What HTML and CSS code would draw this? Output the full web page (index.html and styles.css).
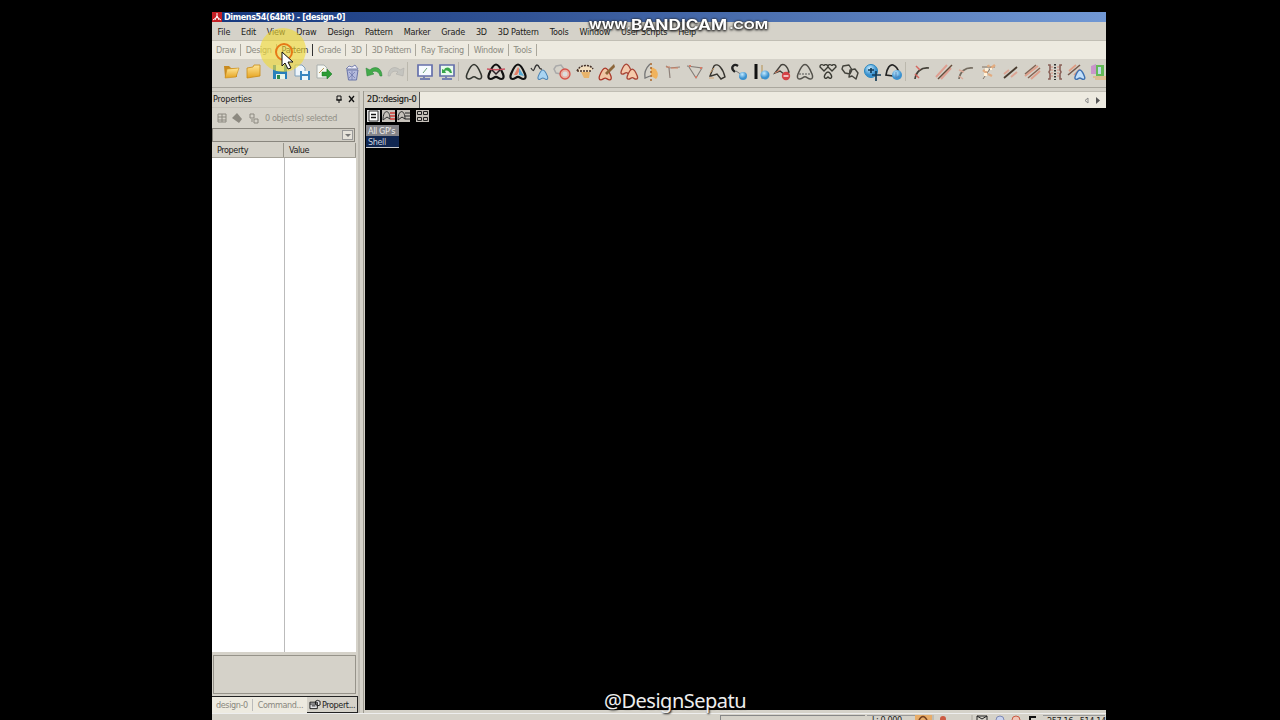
FILE: index.html
```html
<!DOCTYPE html>
<html lang="en"><head><meta charset="utf-8"><title>Dimens54</title><link rel="stylesheet" href="styles.css"></head>
<body>
<svg width="0" height="0" class="defs"><defs>
<path id="piece" d="M9 1.500C6 1.500 4 6 2 11C.8 14 1.500 16 3.500 16C6 16 7 13.800 9 13.800S12 16 14.500 16C16.500 16 17.200 14 16 11C14 6 12 1.500 9 1.500Z"/>
<radialGradient id="ball" cx=".4" cy=".3"><stop offset="0" stop-color="#c3eaff"/><stop offset="1" stop-color="#3a91cf"/></radialGradient>
<linearGradient id="gold" x2="0" y2="1"><stop stop-color="#ffe695"/><stop offset="1" stop-color="#e5a321"/></linearGradient>
</defs></svg>
<div class="window">
<div class="title"><svg class="logo" viewBox="0 0 10 10"><rect width="10" height="10" fill="#c41f24"/><path d="M5 1v4L1 8M5 5l4 3M3 8l2-4 2 4" stroke="#fff" fill="none"/></svg><span>Dimens54(64bit) - [design-0]</span></div>
<div class="menu"><span>File</span><span>Edit</span><span>View</span><span>Draw</span><span>Design</span><span>Pattern</span><span>Marker</span><span>Grade</span><span>3D</span><span>3D Pattern</span><span>Tools</span><span>Window</span><span>User Scripts</span><span>Help</span></div>
<div class="tabs"><span>Draw</span><span>Design</span><span class="on">Pattern</span><span>Grade</span><span>3D</span><span>3D Pattern</span><span>Ray Tracing</span><span>Window</span><span>Tools</span></div>
<div class="toolbar">
<svg viewBox="0 0 18 18"><path d="M2 3h5l2 2h6v9H3z" fill="#c98b20"/><path d="M5 6l12-1-3 9-11 1z" fill="url(#gold)" stroke="#c88a18" stroke-width=".6"/></svg>
<svg viewBox="0 0 18 18"><path d="M3 5l6-1 1-2 6 0v11L3 15z" fill="url(#gold)" stroke="#c88a18" stroke-width=".8"/></svg>
<i></i>
<svg viewBox="0 0 18 18"><path d="M2 2h13l1 1v13H2z" fill="#287fbb"/><path d="M5 2h8v6H5z" fill="#d6eee0"/><path d="M5 11h9v5H5z" fill="#e9f4e9"/><path d="M6 12h3v4H6z" fill="#2f8b4a"/></svg>
<svg viewBox="0 0 18 18"><path d="M2 2h7l3 3v8H2z" fill="#eef5fb" stroke="#7ea0bb"/><path d="M7 8h10v9H7z" fill="#3b87bf"/><path d="M9 8h6v3H9zM9 13h6v4H9z" fill="#eff8fb"/></svg>
<svg viewBox="0 0 18 18"><path d="M2 2h7l3 3v10H2z" fill="#f5f7f2" stroke="#a9afad"/><path d="M4 10l5-5" stroke="#ba9958"/><path d="M7 9h5V6l5 5-5 5v-3H7z" fill="#2b9c35" stroke="#157820" stroke-width=".5"/></svg>
<i class="wide"></i>
<svg viewBox="0 0 18 18"><path d="M4 7h11l-1.500 10h-8z" fill="#b5bbdd" stroke="#6b76a9"/><path d="M3 6l3-3 3 1 3-2 3 4z" fill="#f0f0fa" stroke="#7881ae"/><path d="M6 9l6 6M12 9l-6 6M9 8v9" stroke="#6b76a9" stroke-width=".7"/></svg>
<svg viewBox="0 0 18 18"><path d="M1 5l1 8 7-2-2-2c4-2 7 0 8 4h2C17 5 10 2 5 7z" fill="#43aa4a" stroke="#278338" stroke-width=".5"/></svg>
<svg viewBox="0 0 18 18"><path d="M17 5l-1 8-7-2 2-2c-4-2-7 0-8 4H1C1 5 8 2 13 7z" fill="#c4c4bf" stroke="#aaa9a4" stroke-width=".5"/></svg>
<i class="sep wider"></i>
<svg viewBox="0 0 18 18"><path d="M2 2h14v11H2z" fill="#f6faff" stroke="#6570ab" stroke-width="1.700"/><path d="M8 13v3M4 16h10" stroke="#7580b0" stroke-width="2"/><path d="M7 10l4-5" stroke="#6ca178"/></svg>
<svg viewBox="0 0 18 18"><path d="M2 2h14v11H2z" fill="#e9fbed" stroke="#6570ab" stroke-width="1.700"/><path d="M8 13v3M4 16h10" stroke="#7580b0" stroke-width="2"/><path d="M4 6v4h4L7 8c2-1 4 0 5 2h2C13 4 8 3 6 7z" fill="#38a64b"/></svg>
<i class="sep"></i>
<svg viewBox="0 0 18 18"><use href="#piece" fill="none" stroke="#333630" stroke-width="1.600"/></svg>
<svg viewBox="0 0 18 18"><use href="#piece" fill="none" stroke="#111" stroke-width="2.200"/><path d="M0 6c6 1 12 1 18 0" fill="none" stroke="#cc5260" stroke-width="1.400"/><path d="M5 7l4 4 4-4" fill="none" stroke="#2b2026" stroke-width="1.500"/></svg>
<svg viewBox="0 0 18 18"><use href="#piece" fill="none" stroke="#111" stroke-width="2.200"/><path d="M9 4l-4 8h3l3-5z" fill="#e68068"/><path d="M10 5l5 8-5-1z" fill="#54a9d4"/></svg>
<svg viewBox="0 0 18 18"><path d="M0 5c4 7 3-3 6-3s1 5 5 4" fill="none" stroke="#333" stroke-width="1.300"/><use href="#piece" transform="translate(6 6)scale(.65)" fill="#a9d4f2" stroke="#4b83b3" stroke-width="1.600"/></svg>
<svg viewBox="0 0 18 18"><path d="M3 3l5-1 3 4-3 5-5-1-2-4z" fill="none" stroke="#aaa" stroke-width="1.500"/><circle cx="12" cy="11" r="5" fill="#e8b2a5" stroke="#d5534a" stroke-width="1.300"/><circle cx="12" cy="11" r="2.500" fill="#ddd"/></svg>
<svg viewBox="0 0 18 18"><path d="M1 8c3-7 13-7 16-2l-4 3H1" fill="#f3dfbf"/><path d="M1 8c3-7 13-7 16-2M1 8h14" fill="none" stroke="#44312a" stroke-width="1.500" stroke-dasharray="2 1"/><path d="M5 9h9l-1 6H8z" fill="#e9b46b"/></svg>
<svg viewBox="0 0 18 18"><use href="#piece" transform="translate(0 4)scale(.8)" fill="#f0c6a4" stroke="#aa382a" stroke-width="1.600"/><path d="M7 10l9-9 1 3-8 8z" fill="#8c6539"/></svg>
<svg viewBox="0 0 18 18"><use href="#piece" transform="scale(.7)" fill="#f2c9ad" stroke="#a84435" stroke-width="1.900"/><use href="#piece" transform="translate(6 5)scale(.7)" fill="#f6caab" stroke="#a84435" stroke-width="1.900"/></svg>
<svg viewBox="0 0 18 18"><path d="M8 1C4 5 2 10 3 15l5-2" fill="none" stroke="#777" stroke-width="1.300"/><path d="M9 4c8 2 8 9 5 12l-5-3z" fill="#f0b25c"/><path d="M9 0v18" stroke="#a66022" stroke-width="1.400" stroke-dasharray="2 2"/></svg>
<svg viewBox="0 0 18 18"><path d="M2 3l3 2 11-1M5 5l1 10" fill="none" stroke="#8e817a" stroke-width="1.200"/><path d="M2 4h4M7 5h7" stroke="#d48263"/></svg>
<svg viewBox="0 0 18 18"><path d="M1 3l15 2-6 10L3 4" fill="none" stroke="#827d78" stroke-width="1.100"/><path d="M3 3h2M14 5h2M10 13v2" stroke="#d47b67" stroke-width="2"/></svg>
<svg viewBox="0 0 18 18"><path d="M2 13L6 3c4-4 9 3 11 11l-4 2-4-5-6 2z" fill="none" stroke="#373530" stroke-width="1.400"/><path d="M2 10l4-5M1 15h5" stroke="#cfa06e"/></svg>
<svg viewBox="0 0 18 18"><path d="M8 3C4 0 1 4 3 7l2 2" fill="none" stroke="#222" stroke-width="2.300"/><path d="M6 8l6 4" stroke="#777"/><circle cx="13" cy="13" r="4" fill="url(#ball)"/></svg>
<svg viewBox="0 0 18 18"><path d="M4 1v15" stroke="#111" stroke-width="3"/><path d="M10 2v14" stroke="#b59150"/><circle cx="13" cy="12" r="4.500" fill="url(#ball)"/></svg>
<svg viewBox="0 0 18 18"><path d="M1 10L7 2c4-2 7 3 8 7l-5 2-4-3z" fill="none" stroke="#43413b" stroke-width="1.400"/><path d="M1 10l5-3" stroke="#d88062"/><circle cx="12" cy="13" r="4.200" fill="#d44245"/><path d="M9.500 13h5" stroke="#fff" stroke-width="1.300"/></svg>
<svg viewBox="0 0 18 18"><use href="#piece" fill="none" stroke="#53514b" stroke-width="1.500"/><path d="M3 11h12" stroke="#555" stroke-width="1.200" stroke-dasharray="2 1"/></svg>
<svg viewBox="0 0 18 18"><path d="M5 8L1 4c0-4 4-2 4-1 0-2 4-2 4 1zM13 8L9 4c0-4 4-2 4-1 0-2 4-2 4 1zM9 9c-2 0-5 5-3 6 1 1 3-1 3-1s2 2 3 1c2-1-1-6-3-6z" fill="none" stroke="#3b3b34" stroke-width="1.400"/></svg>
<svg viewBox="0 0 18 18"><path d="M2 3l6-1 3 5-2 4-5-1-3-4zM9 7l5-1 3 4-2 6-4-3-3 1z" fill="none" stroke="#44433c" stroke-width="1.400" stroke-linejoin="round"/></svg>
<svg viewBox="0 0 18 18"><circle cx="8" cy="8" r="6.500" fill="url(#ball)" stroke="#2687c0"/><path d="M9 12h9M13 8v10M5 7h6M8 5v5" stroke="#153d59" stroke-width="1.700"/></svg>
<svg viewBox="0 0 18 18"><path d="M8 13L1 12C2 5 5 1 8 2s5 4 6 8" fill="none" stroke="#222" stroke-width="1.700"/><circle cx="12" cy="12" r="5" fill="url(#ball)"/><path d="M11 9v6l3-2" fill="none" stroke="#5383ba"/></svg>
<i class="sep wide"></i>
<svg viewBox="0 0 18 18"><path d="M2 16C3 9 8 4 16 5" fill="none" stroke="#444038" stroke-width="1.700"/><path d="M3 3l4 4M2 11l4 4" stroke="#d56860" stroke-width="1.500"/></svg>
<svg viewBox="0 0 18 18"><path d="M1 14L12 2M6 16L16 5" stroke="#dfa092" stroke-width="2"/><path d="M3 16L17 2" stroke="#644c3a" stroke-width="1.400"/></svg>
<svg viewBox="0 0 18 18"><path d="M2 16C3 9 8 4 16 5" fill="none" stroke="#746c60" stroke-width="1.700"/><path d="M2 7l5 2M2 13l4 3" stroke="#dbaa99" stroke-width="1.400"/></svg>
<svg viewBox="0 0 18 18"><path d="M4 16L13 3M3 4h13" stroke="#817365"/><path d="M9 2l1 2M4 7l4 3M9 11l4 2M12 5l4-3" stroke="#e2ac80" stroke-width="2.500"/><path d="M6 5h3v3H6zM5 10h3v3H5zM11 5h2v2h-2z" fill="#fff1d8"/></svg>
<svg viewBox="0 0 18 18"><path d="M2 11l5-4M9 14l6-5" stroke="#dda594" stroke-width="2"/><path d="M2 15L15 4" stroke="#493b2f" stroke-width="1.800"/></svg>
<svg viewBox="0 0 18 18"><path d="M1 13L14 3M7 16l9-8" stroke="#dfa08c" stroke-width="2"/><path d="M1 11L12 2M4 15L16 5" stroke="#846454" stroke-width="1.500"/></svg>
<svg viewBox="0 0 18 18"><path d="M2 2h2v5l-1 2 1 2v5H2M16 2h-2v5l1 2-1 2v5h2" fill="none" stroke="#896057" stroke-width="1.600"/><path d="M9 1v16" stroke="#333" stroke-width="2" stroke-dasharray="1.500 1.500"/><path d="M6 3v12M12 3v12" stroke="#d88d7c" stroke-dasharray="2 1"/></svg>
<svg viewBox="0 0 18 18"><path d="M1 8l7-6M6 12l6-6" stroke="#df9e86" stroke-width="1.700"/><path d="M0 12L12 2" stroke="#75584b" stroke-width="1.600"/><use href="#piece" transform="translate(6 6)scale(.65)" fill="#c4e0fa" stroke="#3f71b1" stroke-width="2.200"/></svg>
<svg viewBox="0 0 18 18"><path d="M1 3l5-2v10H1z" fill="#c996ca"/><path d="M6 2h8v11H6z" fill="#64b957"/><path d="M8 4h3v7H8z" fill="#c1d9e8"/><path d="M3 14h13M5 16h11" stroke="#e3a75e"/></svg>
</div>
<div class="workspace">
<div class="left">
<div class="phead"><span>Properties</span><svg viewBox="0 0 20 8"><path d="M2 1h4v4H2zM1 5h6M4 5v3" fill="none" stroke="#111"/><path d="M14 1l5 6M19 1l-5 6" stroke="#111" stroke-width="1.300"/></svg></div>
<div class="pbar"><svg viewBox="0 0 42 12"><g fill="none" stroke="#8c8980"><path d="M1 2h8v8H1zM1 5h8M1 8h8M5 2v8"/><path d="M33 2h4v4h-4zM37 7h4v4h-4zM35 7v3"/></g><path d="M15 6l5-5 5 6-3 4z" fill="#8c8980"/></svg><span>0 object(s) selected</span></div>
<div class="combo"><b></b></div>
<div class="cols"><span>Property</span><span>Value</span></div>
<div class="grid"><div></div></div>
<div class="desc"></div>
<div class="btabs"><span>design-0</span><span>Command...</span><div><svg viewBox="0 0 13 11"><path d="M1 3h8v7H1zM1 5h8M3 7h4M7 2l2-1 3 1v4l-3 1-2-2z" fill="#e8e8ec" stroke="#111"/></svg><span>Propert...</span></div></div>
</div>
<div class="right">
<div class="doctabs"><span>2D::design-0</span><svg viewBox="0 0 16 7"><path d="M4 1v5L1 3.500z" fill="none" stroke="#888"/><path d="M12 0v7l4-3.500z" fill="#555"/></svg></div>
<div class="canvas"><div class="modes">
<svg viewBox="0 0 13 12"><path d="M0 0h13v12H0z" fill="#ddd"/><path d="M2 1h9v10H2z" fill="#fff" stroke="#333"/><path d="M4 4.500h5M4 7.500h5" stroke="#111" stroke-width="1.500"/></svg>
<svg viewBox="0 0 13 12"><path d="M0 0h13v12H0z" fill="#c6c1ba"/><path d="M1 10c0-11 7-11 7-1l-3-2z" fill="none" stroke="#333"/><path d="M8 3h5M8 6h5M8 9h5" stroke="#cf3c36" stroke-width="1.500"/></svg>
<svg viewBox="0 0 13 12"><path d="M0 0h13v12H0z" fill="#c6c1ba"/><path d="M1 10c0-11 7-11 7-1l-3-2z" fill="none" stroke="#222"/><path d="M8 3h5M8 6h5M8 9h5" stroke="#222"/></svg>
<svg class="gap" viewBox="0 0 13 12"><path d="M0 0h13v12H0z" fill="#c6c1ba"/><path d="M1.500 1.500h4v3h-4zM7.500 1.500h4v3h-4zM1.500 7.500h4v3h-4zM7.500 7.500h4v3h-4z" fill="none" stroke="#222"/></svg></div>
<div class="layers"><span>All GP's</span><span>Shell</span></div></div>
</div></div>
<div class="status"><i class="c1"></i><span class="c2">L: 0.000</span><svg viewBox="0 0 128 5"><rect width="17" height="5" fill="#e8ad69"/><path d="M4 5q4-7 8 0" fill="none" stroke="#764321" stroke-width="1.500"/><path d="M18 0v5M57 0v5" stroke="#aaa79e"/><circle cx="28" cy="4" r="3" fill="#cc5b43"/><path d="M62 1h10v5M62 1l5 3 5-3M62 1v5" fill="none" stroke="#222"/><circle cx="85" cy="5" r="4" fill="#cad3ed" stroke="#7e89b4"/><circle cx="101" cy="5" r="4" fill="#f0c5b7" stroke="#c85b45"/><path d="M114 2h7M115 2v4" stroke="#111" stroke-width="2"/></svg><span class="c3">257.16, -514.141</span></div>
</div>
<div class="halo"></div>
<svg class="cursor" viewBox="0 0 14 20"><path d="M1 1v14l3-3 3 6 3-1-3-6h5z" fill="#fff" stroke="#111"/></svg>
<div class="brand"><svg viewBox="0 0 182 20"><g font-family="Inter, sans-serif" font-weight="700" fill="#fff"><text x="1" y="13" font-size="13" textLength="38" lengthAdjust="spacingAndGlyphs">www</text><text x="39" y="13" font-size="11">.</text><text x="43" y="13.500" font-size="14" textLength="96" lengthAdjust="spacingAndGlyphs">BANDICAM</text><text x="141" y="13" font-size="11" textLength="39" lengthAdjust="spacingAndGlyphs">.COM</text></g></svg></div>
<div class="handle">@DesignSepatu</div>
</body></html>
```
FILE: styles.css
```css
*{box-sizing:border-box}
body{margin:0;background:#000;width:1280px;height:720px;overflow:hidden;font:9px/12px "DejaVu Sans Condensed","DejaVu Sans",sans-serif;color:#1c1b19;padding:12px 0 0 212px;letter-spacing:-.4px;position:relative}
span{white-space:nowrap}
svg{display:block;overflow:visible}
.defs{position:absolute}
.window{width:894px;height:708px;display:flex;flex-direction:column;background:#d5d2c9;overflow:hidden}
.window>div{flex:none}
.title{height:10px;background:linear-gradient(90deg,#17397f,#315395 35%,#7198d4);display:flex;align-items:center;color:#fff;font-weight:700;gap:2px;letter-spacing:-.4px}
.title span{line-height:10px}
.logo{width:10px;height:10px}
.menu{height:19px;border-bottom:1px solid #c1beb4;display:flex;align-items:center;gap:10.9px;padding:2px 0 0 5.5px;letter-spacing:-.2px}
.tabs{height:18px;background:#edeae0;display:flex;align-items:center;color:#8c8a80;padding-left:4px;letter-spacing:-.36px}
.tabs span{padding:0 4px 0 5px;border-right:1px solid #aaa79c;line-height:12px}
.tabs span:first-child{padding-left:0}
.tabs .on{color:#222;border-right-color:#333}
.toolbar{height:28px;display:flex;align-items:center;padding:0 0 3px 7.500px}
.toolbar svg{width:18px;height:18px;margin:0 2.050px;flex:none}
.toolbar i{width:4.8px;height:19px;flex:none}
.toolbar .wide{width:6.2px}
.toolbar .wider{width:6.8px}
.toolbar .sep{border-left:1px solid #bbb8ad}
.workspace{height:626px;border-top:1px solid #aaa79e;display:flex;padding-top:3px}
.left{width:148px;display:flex;flex-direction:column;border-right:2px solid #c0bdb4;border-top:1px solid #b5b2a8}
.left>div{flex:none}
.phead{height:15px;display:flex;align-items:center;justify-content:space-between;padding:0 3px 2px 1px;letter-spacing:-.2px}
.phead svg{width:20px;height:8px}
.pbar{height:21px;display:flex;align-items:center;gap:6px;padding-left:5px;color:#929087;border-top:1px solid #c5c2b9}
.pbar svg{width:42px;height:12px}
.combo{height:14px;width:143px;border:1px solid #89867e;display:flex;justify-content:flex-end;background:#d0cdc4}
.combo b{width:11px;margin:1px;background:#e5e2da;border:1px solid #999}
.combo b:after{content:"";display:block;margin:3px 2px;border:3px solid transparent;border-top-color:#777}
.cols{height:15px;width:144px;margin-top:1px;display:flex;border-bottom:1px solid #a5a298}
.cols span{flex:1;padding:1px 0 0 5px;border-right:1px solid #99968c}
.grid{width:144px;height:494px;background:#fff}
.grid div{width:73px;height:100%;border-right:1px solid #bbb}
.desc{height:39px;margin:3px 3px 0 1px;border:1px solid #96938a;width:143px}
.btabs{height:17px;margin-top:2px;background:#edeae0;border-top:1px solid #222;display:flex;align-items:center;color:#89877e}
.btabs>span{padding:0 4px;height:12px;border-right:1px solid #bbb}
.btabs>span+span{padding:0 3px 0 5px;border:0}
.btabs div{display:flex;background:#d5d2c9;height:16px;align-items:center;gap:1px;margin-left:auto;border-right:1px solid #222;border-bottom:1px solid #222;color:#222;width:51px;padding-left:2px}
.btabs svg{width:12px;height:11px}
.right{margin-left:3px;flex:1;display:flex;flex-direction:column;border-left:1px solid #9c998f}
.doctabs{height:17px;background:#edeae0;display:flex;align-items:center;justify-content:space-between;padding-right:6px;border-top:1px solid #c1beb4}
.doctabs span{height:16px;padding:1px 3px 0;background:#d5d2c9;border-right:1px solid #555;letter-spacing:-.2px;-webkit-text-stroke:.2px #1c1b19}
.doctabs svg{width:16px;height:7px}
.canvas{height:602px;background:#000;margin-left:1px;padding:2px 0 0 1px}
.modes{display:flex;gap:2px;padding-left:1px}
.modes svg{width:13px;height:12px}
.modes .gap{margin-left:4px}
.layers{width:33px;margin-top:3px;color:#eee}
.layers span{display:block;height:11px;line-height:12px;padding-left:2px;background:#85858a}
.layers span+span{background:#102650;color:#c8d0df;border-bottom:1px solid #ccc;height:12px}
.status{height:7px;display:flex;padding-top:1px;border-top:1px solid #eee;overflow:hidden}
.status>*{flex:none}
.status .c1{width:145px;margin-left:508px;border-top:1px solid #888;border-left:1px solid #888}
.status .c2{width:48px;margin-left:2px;padding-left:5px;border-top:1px solid #999;line-height:9px}
.status svg{width:128px;height:5px}
.status .c3{padding-left:4px;line-height:10px;width:62px;border-top:1px solid #999}
.halo{position:absolute;left:260px;top:28px;width:46px;height:44px;border-radius:50%;background:rgba(240,218,55,.62)}
.halo:after{content:"";position:absolute;left:15px;top:15px;width:14px;height:14px;border:2px solid #e77917;border-radius:50%}
.cursor{position:absolute;left:281px;top:51px;width:14px;height:20px}
.brand{position:absolute;left:588px;top:16px;width:182px;height:20px;filter:drop-shadow(0 0 1px #222) drop-shadow(0 1px 1px #222)}
.brand svg{width:182px;height:20px;letter-spacing:0}
.handle{position:absolute;left:604px;top:688px;font:20px/25px "Noto Sans",sans-serif;color:#eee;letter-spacing:-.5px;text-shadow:1px 1px 2px #000}
```
